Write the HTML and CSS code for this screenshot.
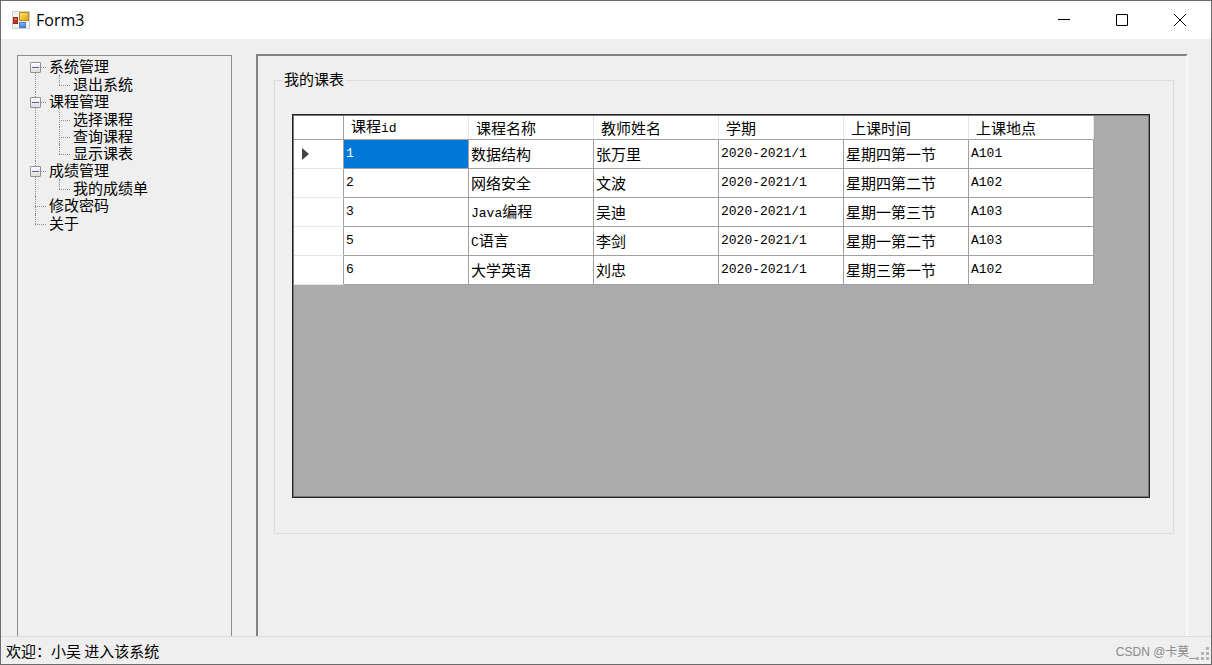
FILE: index.html
```html
<!DOCTYPE html>
<html lang="zh-CN">
<head>
  <meta charset="UTF-8" />
  <meta name="viewport" content="width=device-width, initial-scale=1.0"/>
  <title>Form3</title>
  <link rel="stylesheet" href="styles.css">
</head>
<body>

<header class="titlebar">
  <svg class="app-icon" width="18" height="18" viewBox="0 0 18 18" aria-hidden="true">
    <defs>
      <linearGradient id="gold" x2="1" y2="1"><stop stop-color="#ffe680"/><stop offset="1" stop-color="#dda000"/></linearGradient>
      <linearGradient id="blue" x2="0" y2="1"><stop stop-color="#8fbcff"/><stop offset="1" stop-color="#3b78dc"/></linearGradient>
    </defs>
    <rect x="0.500" y="0.500" width="17" height="17" fill="#f0f0f0" stroke="#cfcfcf"/>
    <path d="M1 5.500h6M7 12.500h10M6.500 1v16" stroke="#fff"/>
    <rect x="7.500" y="1.500" width="9" height="8" fill="url(#gold)" stroke="#b98a14"/>
    <rect x="1.500" y="6.500" width="4" height="6" fill="#cc3527" stroke="#9d2318"/>
    <path d="M2 8h3" stroke="#ec8a78"/>
    <rect x="7.500" y="11.500" width="6" height="5" fill="url(#blue)" stroke="#4a7ccb"/>
  </svg>
  <h1>Form3</h1>
  <div class="window-buttons">
    <button type="button" aria-label="最小化"><svg width="12" height="12" viewBox="0 0 12 12"><path d="M0 5.500h12"/></svg></button>
    <button type="button" aria-label="最大化"><svg width="12" height="12" viewBox="0 0 12 12"><path d="M0.500 0.500h11v11h-11z"/></svg></button>
    <button type="button" aria-label="关闭"><svg width="12" height="12" viewBox="0 0 12 12"><path d="M0 0l12 12M12 0L0 12"/></svg></button>
  </div>
</header>

<main class="client">
  <nav class="tree">
    <ul>
      <li>
        <button type="button" class="toggle" aria-label="折叠"></button><a href="#">系统管理</a>
        <ul>
          <li><a href="#">退出系统</a></li>
        </ul>
      </li>
      <li>
        <button type="button" class="toggle" aria-label="折叠"></button><a href="#">课程管理</a>
        <ul>
          <li><a href="#">选择课程</a></li>
          <li><a href="#">查询课程</a></li>
          <li><a href="#">显示课表</a></li>
        </ul>
      </li>
      <li>
        <button type="button" class="toggle" aria-label="折叠"></button><a href="#">成绩管理</a>
        <ul>
          <li><a href="#">我的成绩单</a></li>
        </ul>
      </li>
      <li><a href="#">修改密码</a></li>
      <li><a href="#">关于</a></li>
    </ul>
  </nav>

  <section class="panel">
    <fieldset class="group">
      <legend>我的课表</legend>
      <div class="grid-view">
        <table>
          <thead>
            <tr>
              <th class="row-head"></th>
              <th>课程<span class="latin">id</span></th>
              <th>课程名称</th>
              <th>教师姓名</th>
              <th>学期</th>
              <th>上课时间</th>
              <th>上课地点</th>
            </tr>
          </thead>
          <tbody>
            <tr>
              <th class="row-head"><svg width="7" height="12" viewBox="0 0 7 12" aria-hidden="true"><path d="M0 0l7 6-7 6z"/></svg></th>
              <td class="latin selected">1</td><td>数据结构</td><td>张万里</td><td class="latin">2020-2021/1</td><td>星期四第一节</td><td class="latin">A101</td>
            </tr>
            <tr>
              <th class="row-head"></th>
              <td class="latin">2</td><td>网络安全</td><td>文波</td><td class="latin">2020-2021/1</td><td>星期四第二节</td><td class="latin">A102</td>
            </tr>
            <tr>
              <th class="row-head"></th>
              <td class="latin">3</td><td><span class="latin">Java</span>编程</td><td>吴迪</td><td class="latin">2020-2021/1</td><td>星期一第三节</td><td class="latin">A103</td>
            </tr>
            <tr>
              <th class="row-head"></th>
              <td class="latin">5</td><td><span class="latin">C</span>语言</td><td>李剑</td><td class="latin">2020-2021/1</td><td>星期一第二节</td><td class="latin">A103</td>
            </tr>
            <tr>
              <th class="row-head"></th>
              <td class="latin">6</td><td>大学英语</td><td>刘忠</td><td class="latin">2020-2021/1</td><td>星期三第一节</td><td class="latin">A102</td>
            </tr>
          </tbody>
        </table>
      </div>
    </fieldset>
  </section>
</main>

<footer class="statusbar">
  <span>欢迎：小吴 进入该系统</span>
  <span class="credit">CSDN @卡莫_</span>
  <svg class="grip" width="13" height="13" viewBox="0 0 13 13" aria-hidden="true">
    <path d="M10 0h3v3h-3zM5 5h3v3h-3zM10 5h3v3h-3zM0 10h3v3h-3zM5 10h3v3h-3zM10 10h3v3h-3z"/>
  </svg>
</footer>

</body>
</html>
```

FILE: styles.css
```css
* {
  box-sizing: border-box;
}

body {
  margin: 0;
  height: 100vh;
  display: flex;
  flex-direction: column;
  border: 1px solid #6b6b6b;
  background: #efefef;
  color: #000;
  font-family: "Noto Sans CJK SC", sans-serif;
  font-size: 15px;
  overflow: hidden;
}

button {
  padding: 0;
  border: none;
  background: none;
}

/* title bar */

.titlebar {
  flex: none;
  display: flex;
  align-items: center;
  height: 38px;
  padding: 0 2px 0 11px;
  background: #fff;
}

.titlebar h1 {
  margin: 0 0 0 6px;
  font-family: "Open Sans", sans-serif;
  font-size: 16px;
  font-weight: normal;
  line-height: 20px;
}

.window-buttons {
  display: flex;
  align-self: stretch;
  margin-left: auto;
}

.window-buttons button {
  display: flex;
  align-items: center;
  justify-content: center;
  width: 58px;
}

.window-buttons path {
  fill: none;
  stroke: #000;
}

/* client area */

.client {
  flex: 1;
  min-height: 0;
  display: flex;
  gap: 24px;
  padding: 15px 23px 0 16px;
}

.tree {
  flex: none;
  width: 215px;
  margin-top: 1px;
  padding: 1px 0 0 17px;
  border: 1px solid #8a8c96;
  border-bottom: none;
}

.tree ul {
  margin: 0;
  padding: 0;
  list-style: none;
}

.tree li {
  position: relative;
  padding-left: 14px;
  line-height: 18px;
}

.tree ul ul {
  margin-left: 10px;
}

.tree ul ul li {
  line-height: 17px;
}

.tree a {
  display: block;
  color: #000;
  text-decoration: none;
}

.tree li::before {
  content: "";
  position: absolute;
  top: 0;
  bottom: 0;
  left: 0;
  border-left: 1px dotted #888;
}

.tree li:last-child::before {
  bottom: auto;
  height: 10px;
}

.tree > ul > li:first-child::before {
  top: 10px;
}

.tree li::after {
  content: "";
  position: absolute;
  top: 10px;
  left: 0;
  width: 11px;
  border-top: 1px dotted #888;
}

.toggle {
  position: absolute;
  z-index: 1;
  top: 5px;
  left: -5px;
  width: 11px;
  height: 11px;
  border: 1px solid #919191;
  border-radius: 1px;
  background: linear-gradient(#4b63a7, #4b63a7) center / 7px 1px no-repeat, linear-gradient(#fff, #ddd);
}

.panel {
  flex: 1;
  min-width: 0;
  padding: 16px 12px 0 16px;
  border-style: solid;
  border-width: 2px 2px 0 2px;
  border-color: #828282 #f8f8f8 #828282 #828282;
}

.group {
  min-width: 0;
  margin: 0;
  padding: 25px 23px 35px 17px;
  border: 1px solid #dcdcdc;
}

.group legend {
  margin-left: -10px;
  padding: 0 2px 4px;
  line-height: 13px;
}

/* timetable */

.grid-view {
  min-height: 384px;
  padding: 1px;
  border: 1px solid #222;
  background: #ababab;
  box-shadow: inset 0 0 0 1px #777;
}

table {
  table-layout: fixed;
  width: 800px;
  border-collapse: separate;
  border-spacing: 0;
  background: #fff;
}

th,
td {
  height: 29px;
  padding: 0 2px;
  border: solid #a0a0a0;
  border-width: 0 1px 1px 0;
  font-weight: normal;
  line-height: 20px;
  text-align: left;
  white-space: nowrap;
}

thead th {
  height: 24px;
  padding-left: 7px;
  border-right-color: #e5e5e5;
}

.row-head,
thead .row-head {
  width: 50px;
  padding-left: 8px;
  border-right-color: #a0a0a0;
}

tbody .row-head {
  border-bottom-color: #e5e5e5;
}

.row-head svg {
  display: block;
  fill: #444;
}

.latin {
  font-family: "Liberation Mono", monospace;
  font-size: 13px;
}

.selected {
  background: #0078d7;
  color: #fff;
}

/* status bar */

.statusbar {
  flex: none;
  display: flex;
  align-items: center;
  height: 28px;
  padding: 0 2px 0 5px;
  border-top: 1px solid #d9d9d9;
}

.credit {
  margin-left: auto;
  color: #8a8a8a;
  font-family: "Liberation Sans", "Noto Sans CJK SC", sans-serif;
  font-size: 12px;
}

.grip {
  align-self: flex-end;
  margin-bottom: 4px;
  fill: #b4b4b4;
}
```
